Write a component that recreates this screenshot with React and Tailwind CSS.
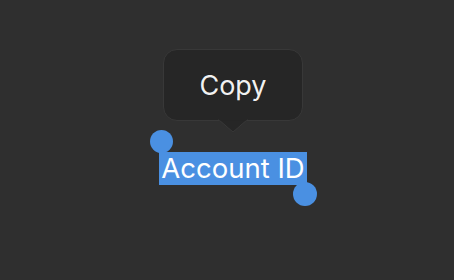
export default function App() {
  return (
    <div
      className="w-[454px] h-[280px] bg-[#2f2f2f] flex flex-col items-center pt-[49px] pl-[12px]"
      style={{ fontFamily: 'Inter, "Liberation Sans", Arial, sans-serif' }}
    >
      <div className="relative w-[140px] h-[72px] rounded-[14px] bg-[#262626] border border-[#383838] flex items-center justify-center">
        <span className="text-[27px] leading-none text-white/95">Copy</span>
        <svg
          className="absolute left-1/2 -translate-x-1/2 top-full -mt-[1px]"
          width="30"
          height="14"
          viewBox="0 0 30 14"
        >
          <path d="M0 0 L15 13 L30 0 Z" fill="#262626" />
          <path d="M0.5 0.5 L15 13 L29.5 0.5" fill="none" stroke="#383838" strokeWidth="1" />
          <rect x="1" y="0" width="28" height="1.2" fill="#262626" />
        </svg>
      </div>
      <div className="relative mt-[31px] w-[148px] h-[33px] bg-[#4a90e2] flex items-center justify-center">
        <span className="text-[27.5px] leading-none text-white">Account ID</span>
        <div className="absolute -left-[9px] -top-[22px] w-[23px] h-[23px] rounded-full bg-[#4a90e2]" />
        <div className="absolute -right-[10px] -bottom-[21px] w-[24px] h-[24px] rounded-full bg-[#4a90e2]" />
      </div>
    </div>
  );
}
